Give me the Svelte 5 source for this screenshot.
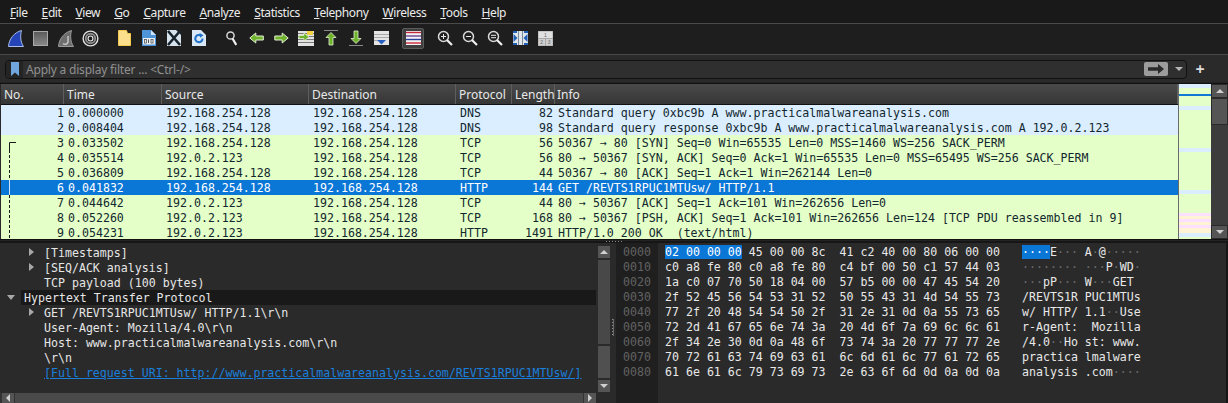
<script lang="ts">
	const menus = [
		['F', 'ile'], ['E', 'dit'], ['V', 'iew'], ['G', 'o'], ['C', 'apture'], ['A', 'nalyze'],
		['S', 'tatistics'], ['T', 'elephony'], ['W', 'ireless'], ['T', 'ools'], ['H', 'elp']
	];

	const host = '192.168.254.128';
	const peer = '192.0.2.123';
	const packets = [
		[1, '0.000000', host, host, 'DNS', 82, 'Standard query 0xbc9b A www.practicalmalwareanalysis.com', 'dns'],
		[2, '0.008404', host, host, 'DNS', 98, 'Standard query response 0xbc9b A www.practicalmalwareanalysis.com A 192.0.2.123', 'dns'],
		[3, '0.033502', host, host, 'TCP', 56, '50367 → 80 [SYN] Seq=0 Win=65535 Len=0 MSS=1460 WS=256 SACK_PERM', 'tcp'],
		[4, '0.035514', peer, host, 'TCP', 56, '80 → 50367 [SYN, ACK] Seq=0 Ack=1 Win=65535 Len=0 MSS=65495 WS=256 SACK_PERM', 'tcp'],
		[5, '0.036809', host, host, 'TCP', 44, '50367 → 80 [ACK] Seq=1 Ack=1 Win=262144 Len=0', 'tcp'],
		[6, '0.041832', host, host, 'HTTP', 144, 'GET /REVTS1RPUC1MTUsw/ HTTP/1.1', 'sel'],
		[7, '0.044642', peer, host, 'TCP', 44, '80 → 50367 [ACK] Seq=1 Ack=101 Win=262656 Len=0', 'tcp'],
		[8, '0.052260', peer, host, 'TCP', 168, '80 → 50367 [PSH, ACK] Seq=1 Ack=101 Win=262656 Len=124 [TCP PDU reassembled in 9]', 'tcp'],
		[9, '0.054231', peer, host, 'HTTP', 1491, 'HTTP/1.0 200 OK  (text/html)', 'tcp']
	];

	const tree = [
		{ text: '[Timestamps]', arrow: 'right', cls: 'd1' },
		{ text: '[SEQ/ACK analysis]', arrow: 'right', cls: 'd1' },
		{ text: 'TCP payload (100 bytes)', cls: 'd1' },
		{ text: 'Hypertext Transfer Protocol', arrow: 'down', cls: 'd0 picked' },
		{ text: 'GET /REVTS1RPUC1MTUsw/ HTTP/1.1\\r\\n', arrow: 'right', cls: 'd1' },
		{ text: 'User-Agent: Mozilla/4.0\\r\\n', cls: 'd1' },
		{ text: 'Host: www.practicalmalwareanalysis.com\\r\\n', cls: 'd1' },
		{ text: '\\r\\n', cls: 'd1' },
		{ text: '[Full request URI: http://www.practicalmalwareanalysis.com/REVTS1RPUC1MTUsw/]', cls: 'd1 link' }
	];

	const dump = [
		'02 00 00 00 45 00 00 8c 41 c2 40 00 80 06 00 00',
		'c0 a8 fe 80 c0 a8 fe 80 c4 bf 00 50 c1 57 44 03',
		'1a c0 07 70 50 18 04 00 57 b5 00 00 47 45 54 20',
		'2f 52 45 56 54 53 31 52 50 55 43 31 4d 54 55 73',
		'77 2f 20 48 54 54 50 2f 31 2e 31 0d 0a 55 73 65',
		'72 2d 41 67 65 6e 74 3a 20 4d 6f 7a 69 6c 6c 61',
		'2f 34 2e 30 0d 0a 48 6f 73 74 3a 20 77 77 77 2e',
		'70 72 61 63 74 69 63 61 6c 6d 61 6c 77 61 72 65',
		'61 6e 61 6c 79 73 69 73 2e 63 6f 6d 0d 0a 0d 0a'
	].map((line) => line.split(' '));

	const offset = (i: number) => (i * 16).toString(16).padStart(4, '0');
	const printable = (b: string) => {
		const n = parseInt(b, 16);
		return n >= 32 && n < 127;
	};
	const ascii = (b: string) => (printable(b) ? String.fromCharCode(parseInt(b, 16)) : '·');
	const hexText = (line: string[]) => line.slice(0, 8).join(' ') + '  ' + line.slice(8).join(' ');

	// minimap colour bands, top to bottom
	const bands = [
		['#daeeff', 4], ['#e4ffc7', 6], ['#1078d4', 2], ['#e4ffc7', 10], ['#daeeff', 4], ['#e4ffc7', 38],
		['#daeeff', 4], ['#e4ffc7', 38], ['#daeeff', 4], ['#e4ffc7', 19], ['#fce0ff', 3], ['#fff3d6', 3],
		['#fce0ff', 3], ['#fff3d6', 3], ['#fce0ff', 3], ['#fff3d6', 5], ['#daeeff', 4]
	];
</script>

<div class="app">
	<nav class="menubar">
		{#each menus as [key, rest]}
			<span class="menu"><u>{key}</u>{rest}</span>
		{/each}
	</nav>

	<div class="toolbar">
		<button class="tool" aria-label="Start"><svg width="16" height="17" viewBox="0 0 16 17"><path d="M.5 16.500C1 9 6 2.500 13.500.5 12 6 12.500 12 15.500 16.500Z" fill="#2444b8" stroke="#a9bde8"/></svg></button>
		<button class="tool" aria-label="Stop"><svg width="15" height="15" viewBox="0 0 15 15"><defs><linearGradient id="stopfill" x1="0" y1="0" x2="0" y2="1"><stop offset="0" stop-color="#5a5a5a"/><stop offset="1" stop-color="#8a8a8a"/></linearGradient></defs><rect x=".5" y=".5" width="14" height="14" fill="url(#stopfill)" stroke="#a8a8a8"/></svg></button>
		<button class="tool" aria-label="Restart"><svg width="16" height="17" viewBox="0 0 16 17"><path d="M.5 16.500C1 9 6 2.500 13.500.5 12 6 12.500 12 15.500 16.500Z" fill="#6e6e6e" stroke="#9a9a9a"/><path d="M10 6v6a3 3 0 0 1-5 1.500" fill="none" stroke="#c4c4c4" stroke-width="1.500"/></svg></button>
		<button class="tool" aria-label="Options"><svg width="17" height="17" viewBox="0 0 18 18" fill="none"><circle cx="9" cy="9" r="7.800" stroke="#e0e0e0" stroke-width="1.500"/><circle cx="9" cy="9" r="5" stroke="#8c8c8c" stroke-width="2"/><circle cx="9" cy="9" r="2.600" stroke="#ececec" stroke-width="1.200"/></svg></button>
		<i class="sep"></i>
		<button class="tool" aria-label="Open"><svg width="13" height="16" viewBox="0 0 13 16"><path d="M.5.5h8l1 3h3v12H.5Z" fill="#fbdf8c" stroke="#f5c94e"/></svg></button>
		<button class="tool" aria-label="Save"><svg width="14" height="16" viewBox="0 0 14 16"><path d="M0 0h9l5 5v11H0Z" fill="#4d94d8"/><path d="M9 0l5 5H9Z" fill="#cfe4f7"/><rect x="1" y="8" width="12" height="6.500" fill="#e8eef2"/><rect x="2.500" y="9.500" width="2" height="3.500" fill="none" stroke="#555" stroke-width=".8"/><rect x="6" y="9.500" width="1" height="3.500" fill="#555"/><rect x="9" y="9.500" width="2" height="3.500" fill="none" stroke="#555" stroke-width=".8"/></svg></button>
		<button class="tool" aria-label="Close"><svg width="14" height="16" viewBox="0 0 14 16"><path d="M0 0h9l5 5v11H0Z" fill="#d6e2ec"/><path d="M1 1l12 14M13 1L1 15" stroke="#16222c" stroke-width="2.600"/></svg></button>
		<button class="tool" aria-label="Reload"><svg width="14" height="16" viewBox="0 0 14 16" fill="none"><path d="M0 0h9l5 5v11H0Z" fill="#d9e8f4"/><path d="M10.500 8.500a3.600 3.600 0 1 1-1.300-2.700" stroke="#1e70c8" stroke-width="2"/><path d="M7.500 3l4 2.200-3.400 2.600Z" fill="#1e70c8"/></svg></button>
		<i class="sep narrow"></i>
		<button class="tool" aria-label="Find"><svg width="11" height="15" viewBox="0 0 11 15" fill="none"><circle cx="4.500" cy="4.500" r="3.600" stroke="#d8d8d8" stroke-width="1.500"/><path d="M6.500 7.500l3.800 6.500" stroke="#f0f0f0" stroke-width="2.200"/></svg></button>
		<button class="tool" aria-label="Back"><svg width="15" height="12" viewBox="0 0 15 12"><path d="M.8 6l6-5v3h7.500v4H6.800v3Z" fill="#6fb32c" stroke="#e4f0d4"/></svg></button>
		<button class="tool" aria-label="Forward"><svg width="15" height="12" viewBox="0 0 15 12"><path d="M14.200 6l-6-5v3H.8v4h7.400v3Z" fill="#6fb32c" stroke="#e4f0d4"/></svg></button>
		<button class="tool" aria-label="Go to packet"><svg width="16" height="16" viewBox="0 0 16 16"><path d="M0 1h16v15H0Z" fill="#e2e2e2"/><path d="M0 3.500h16M0 6.500h16M0 9.500h16M0 12.500h16" stroke="#7a7a7a"/><rect x="9" y="1" width="6" height="4" fill="#f2d040"/><path d="M11 7L6 3v2.400H1v3.200h5V11Z" fill="#6fb32c" stroke="#e4f0d4" stroke-width=".7"/></svg></button>
		<button class="tool" aria-label="First"><svg width="14" height="16" viewBox="0 0 14 16"><path d="M0 .5h14" stroke="#8a8a8a"/><path d="M7 2.500l5 5H9v7.500H5V7.500H2Z" fill="#6fb32c" stroke="#e4f0d4" stroke-width=".8"/></svg></button>
		<button class="tool" aria-label="Last"><svg width="14" height="16" viewBox="0 0 14 16"><path d="M0 15.500h14" stroke="#8a8a8a"/><path d="M7 13.500l5-5H9V1H5v7.500H2Z" fill="#6fb32c" stroke="#e4f0d4" stroke-width=".8"/></svg></button>
		<button class="tool" aria-label="Auto scroll"><svg width="15" height="14" viewBox="0 0 15 14"><rect width="15" height="14" fill="#e4e4e4"/><path d="M0 3.500h15M0 6.500h15M0 9.500h6" stroke="#a8a8a8"/><path d="M3 9h9l-4.500 4.500Z" fill="#2760c0"/></svg></button>
		<i class="sep"></i>
		<button class="tool active" aria-label="Colorize"><svg width="15" height="14" viewBox="0 0 15 14" fill="none"><rect width="15" height="14" fill="#f4f4f4"/><path d="M0 1.500h15" stroke="#c8283c" stroke-width="1.400"/><path d="M0 5h15" stroke="#6a3f8f" stroke-width="1.400"/><path d="M0 8.500h15" stroke="#2c3e9c" stroke-width="1.400"/><path d="M0 12h15" stroke="#c8283c" stroke-width="1.400"/></svg></button>
		<i class="sep"></i>
		<button class="tool" aria-label="Zoom in"><svg width="16" height="16" viewBox="0 0 16 16" fill="none"><circle cx="6.500" cy="6.500" r="5" stroke="#d8d8d8" stroke-width="1.500"/><path d="M10 10l5 5" stroke="#f0f0f0" stroke-width="2.200"/><path d="M4 6.500h5M6.500 4v5" stroke="#e8e8e8"/></svg></button>
		<button class="tool" aria-label="Zoom out"><svg width="16" height="16" viewBox="0 0 16 16" fill="none"><circle cx="6.500" cy="6.500" r="5" stroke="#d8d8d8" stroke-width="1.500"/><path d="M10 10l5 5" stroke="#f0f0f0" stroke-width="2.200"/><path d="M4 6.500h5" stroke="#e8e8e8"/></svg></button>
		<button class="tool" aria-label="Normal size"><svg width="16" height="16" viewBox="0 0 16 16" fill="none"><circle cx="6.500" cy="6.500" r="5" stroke="#d8d8d8" stroke-width="1.500"/><path d="M10 10l5 5" stroke="#f0f0f0" stroke-width="2.200"/><path d="M4 5.300h5M4 7.700h5" stroke="#e8e8e8"/></svg></button>
		<button class="tool" aria-label="Resize columns"><svg width="15" height="14" viewBox="0 0 15 14"><rect width="15" height="14" fill="#e0e6ec"/><path d="M4.500 7L.5 3v8ZM10.500 7l4-4v8Z" fill="#1f5fb4"/><path d="M0 1h4M0 13h4M11 1h4M11 13h4" stroke="#1f5fb4" stroke-width="2"/><path d="M5.500 0v14M9.500 0v14" stroke="#7a8a96"/></svg></button>
		<button class="tool" aria-label="Layout"><svg width="15" height="15" viewBox="0 0 15 15" font-family="'Liberation Sans', sans-serif" font-size="5" text-anchor="middle" fill="#666"><rect width="15" height="15" fill="#a8a8a8"/><rect x=".5" y=".5" width="14" height="6.500" fill="#e0e0e0"/><rect x=".5" y="8" width="6.500" height="6.500" fill="#cfcfcf"/><rect x="8" y="8" width="6.500" height="6.500" fill="#cfcfcf"/><text x="7.500" y="5.500">1</text><text x="3.750" y="13">2</text><text x="11.250" y="13">3</text></svg></button>
	</div>

	<div class="filterbar">
		<div class="filter">
			<span class="bookmark"><svg width="8" height="14" viewBox="0 0 8 14"><path d="M0 0h8v14L4 10.500 0 14Z" fill="#6fa6de"/></svg></span>
			<span class="placeholder">Apply a display filter ... &lt;Ctrl-/&gt;</span>
			<span class="apply"><svg width="16" height="10" viewBox="0 0 16 10"><path d="M0 3.200h10V0l6 5-6 5V6.800H0Z" fill="#2a2a2a"/></svg></span>
			<span class="caret"></span>
		</div>
		<span class="plus">+</span>
	</div>

	<section class="packets">
		<div class="list">
			<div class="row head">
				<span>No.</span><span>Time</span><span>Source</span><span>Destination</span><span>Protocol</span><span>Length</span><span>Info</span>
			</div>
			{#each packets as p}
				<div class="row mono {p[7]}">
					<span class="num">{p[0]}</span><span>{p[1]}</span><span>{p[2]}</span><span>{p[3]}</span><span>{p[4]}</span><span class="num">{p[5]}</span><span>{p[6]}</span>
				</div>
			{/each}
			<svg class="conv" width="10" height="98" viewBox="0 0 10 98" fill="none">
				<path d="M2.500 .5H9M2.500 .5V8" stroke="#1a1a1a"/>
				<path d="M2.500 8V38" stroke="#1a1a1a" stroke-dasharray="3 2"/>
				<path d="M2.500 38V53" stroke="#cfe2f5"/>
				<path d="M2.500 53V98" stroke="#1a1a1a" stroke-dasharray="3 2"/>
			</svg>
		</div>
		<div class="minimap">
			{#each bands as [color, h]}
				<i style="background:{color};height:{h}px"></i>
			{/each}
		</div>
		<div class="vbar">
			<span class="arrow up"></span>
			<span class="thumb list-thumb"></span>
			<span class="track"></span>
			<span class="arrow down"></span>
		</div>
	</section>

	<section class="details">
		<i class="grip-top"></i>
		<div class="tree-pane">
			<div class="tree-main">
				<div class="tree mono">
					{#each tree as node}
						<div class="node {node.cls}">
							{#if node.arrow}<i class="tri {node.arrow}"></i>{/if}
							<span>{node.text}</span>
						</div>
					{/each}
				</div>
				<div class="vbar small">
					<span class="arrow up"></span>
					<span class="track fill"></span>
					<span class="thumb tree-thumb"></span>
					<span class="arrow down"></span>
				</div>
			</div>
			<div class="hbar">
				<span class="harrow left"></span>
				<span class="hthumb"></span>
				<span class="harrow right"></span>
			</div>
		</div>
		<div class="grip"><i></i></div>
		<div class="hex mono">
			<div class="offsets">
				{#each dump as _, i}
					<div>{offset(i)}</div>
				{/each}
			</div>
			<div class="bytes">
				{#each dump as line, i}
					<div class="hexline">
						<span class="hexcol">{#if i === 0}<span class="hl">{hexText(line).slice(0, 11)}</span>{hexText(line).slice(11)}{:else}{hexText(line)}{/if}</span>
						<span class="asciicol">{#each line as b, j}<span class:dim={!printable(b)} class:hl={i === 0 && j < 4}>{ascii(b)}</span>{#if j === 7}{' '}{/if}{/each}</span>
					</div>
				{/each}
			</div>
		</div>
	</section>
</div>

<style>
	:global(body) {
		margin: 0;
		background: #232323;
	}

	.app {
		width: 1228px;
		height: 403px;
		overflow: hidden;
		display: flex;
		flex-direction: column;
		font-family: 'Noto Sans', sans-serif;
		font-size: 12px;
		color: #e4e4e4;
		background: #232323;
	}

	.mono {
		font-family: 'DejaVu Sans Mono', monospace;
		font-size: 11.6px;
		white-space: pre;
	}

	.menubar {
		height: 24px;
		box-sizing: border-box;
		border-bottom: 1px solid #4a4a4a;
		background: #191919;
		display: flex;
		align-items: center;
		padding: 2px 0 0 3px;
	}

	.menu {
		padding: 0 7px;
		font-size: 12px;
		letter-spacing: -0.4px;
		color: #ececec;
		line-height: 21px;
	}

	.toolbar {
		height: 31px;
		box-sizing: border-box;
		padding: 0 0 2px 3px;
		display: flex;
		align-items: center;
		background: #1e1e1e;
		border-bottom: 1px solid #4a4a4a;
	}

	.tool {
		width: 25px;
		height: 20px;
		padding: 0;
		border: 0;
		background: none;
		display: flex;
		align-items: center;
		justify-content: center;
		flex: none;
	}

	.tool.active {
		width: 22px;
		height: 21px;
		background: #3e3e3e;
		border: 1px solid #5c5c5c;
		border-radius: 2px;
		box-sizing: border-box;
	}

	.sep {
		width: 8.5px;
		flex: none;
	}

	.sep.narrow {
		width: 7px;
	}

	.filterbar {
		height: 27px;
		box-sizing: border-box;
		padding: 4px 21px 3px 5px;
		display: flex;
		align-items: center;
		background: #2a2a2a;
	}

	.filter {
		flex: 1;
		height: 19px;
		box-sizing: border-box;
		display: flex;
		align-items: center;
		background: #2f2f2f;
		border: 1px solid #111;
		border-radius: 4px;
	}

	.bookmark {
		width: 17px;
		height: 17px;
		display: flex;
		align-items: center;
		justify-content: center;
		background: #242424;
		border-radius: 3px 0 0 3px;
		flex: none;
	}

	.placeholder {
		margin-left: 3px;
		flex: 1;
		color: #8f8f8f;
		font-size: 12px;
		letter-spacing: -0.2px;
	}

	.apply {
		width: 24px;
		height: 14px;
		background: #9c9c9c;
		border-radius: 2px;
		display: flex;
		align-items: center;
		justify-content: center;
	}

	.caret {
		margin: 0 3px 0 7px;
		width: 0;
		height: 0;
		border: 4px solid transparent;
		border-top: 4px solid #b4b4b4;
		border-bottom: 0;
	}

	.plus {
		margin-left: 6px;
		width: 14px;
		text-align: center;
		font-size: 16px;
		line-height: 20px;
		font-weight: 700;
		color: #dcdcdc;
	}

	.packets {
		height: 157px;
		flex: none;
		margin-top: 1px;
		display: flex;
		background: #2a2a2a;
		border-top: 1px solid #111;
		border-bottom: 1px solid #111;
		box-sizing: border-box;
		padding-left: 1px;
	}

	.list {
		width: 1177px;
		flex: none;
		position: relative;
		background: #e4ffc7;
		overflow: hidden;
	}

	.row {
		display: grid;
		grid-template-columns: 63px 98px 147px 147px 56px 43px 1fr;
		height: 15px;
		line-height: 16px;
	}

	.row > span {
		padding-left: 5px;
		overflow: hidden;
	}

	.row > .num {
		padding: 0;
		text-align: right;
	}

	.row > .num:nth-child(6) {
		padding-right: 2px;
	}

	.row.mono > span:nth-child(n + 2):nth-child(-n + 5) {
		padding-left: 4px;
	}

	.row.mono > span:nth-child(4) {
		padding-left: 3px;
	}

	.row.mono > span:nth-child(7) {
		padding-left: 3px;
	}

	.row.head {
		height: 20px;
		line-height: 21px;
		font-size: 12px;
		color: #e8e8e8;
		background: linear-gradient(#4a4a4a, #363636);
		border-bottom: 1px solid #111;
		box-sizing: content-box;
	}

	.row.head > span {
		padding-left: 3px;
		box-shadow: inset -1px 0 #5e5e5e;
	}

	.row.head > span:last-child {
		padding-left: 2px;
	}

	.dns {
		background: #daeeff;
		color: #12272e;
	}

	.tcp {
		background: #e4ffc7;
		color: #12272e;
	}

	.sel {
		background: #0a76d6;
		color: #fff;
	}

	.conv {
		position: absolute;
		left: 6px;
		top: 58px;
	}

	.minimap {
		width: 33px;
		flex: none;
		background: #e4ffc7;
		display: flex;
		flex-direction: column;
		overflow: hidden;
		border-left: 1px solid #6a6a6a;
		box-sizing: border-box;
	}

	.minimap i {
		display: block;
		flex: none;
	}

	.vbar {
		width: 17px;
		flex: none;
		display: flex;
		flex-direction: column;
		background: #3a3a3a;
	}

	.vbar.small {
		width: 14px;
		margin-left: 1px;
	}

	.arrow {
		height: 14px;
		flex: none;
		background: #555;
		display: flex;
		align-items: center;
		justify-content: center;
		box-sizing: border-box;
		border: 1px solid #2a2a2a;
	}

	.arrow::after {
		content: '';
		border: 4px solid transparent;
	}

	.arrow.up::after {
		border-bottom: 4px solid #d0d0d0;
		border-top: 0;
	}

	.arrow.down::after {
		border-top: 4px solid #d0d0d0;
		border-bottom: 0;
	}

	.thumb {
		flex: none;
		background: #555;
		box-sizing: border-box;
		border: 1px solid #2a2a2a;
	}

	.list-thumb {
		height: 27px;
	}

	.tree-thumb {
		height: 34px;
		background: #505050;
	}

	.track {
		flex: 1;
		background: #3c3c3c;
	}

	.track.fill {
		background: #484848;
		border: 1px solid #2a2a2a;
	}

	.details {
		flex: 1;
		min-height: 0;
		display: flex;
		position: relative;
		background: #2a2a2a;
		border-top: 2px solid #161616;
		margin-top: 1px;
	}

	.grip-top {
		position: absolute;
		left: 606px;
		top: -2px;
		width: 16px;
		height: 1px;
		background: repeating-linear-gradient(90deg, #8a8a8a 0 1px, transparent 1px 3px);
	}

	.tree-pane {
		width: 610px;
		flex: none;
		display: flex;
		flex-direction: column;
	}

	.tree-main {
		flex: 1;
		min-height: 0;
		display: flex;
		padding-top: 2px;
		background: #2a2a2a;
	}

	.tree {
		width: 596px;
		flex: none;
		overflow: hidden;
		color: #e6e6e6;
	}

	.node {
		height: 15px;
		line-height: 16px;
		display: flex;
		position: relative;
	}

	.node.d1 {
		padding-left: 44px;
	}

	.node.d0 {
		padding-left: 24px;
	}

	.node.picked {
		margin-left: 21px;
		padding-left: 3px;
		background: #191919;
	}

	.node.link span {
		color: #1a7fdc;
		text-decoration: underline;
	}

	.tri {
		position: absolute;
		width: 0;
		height: 0;
		border: 4px solid transparent;
	}

	.tri.right {
		left: 29px;
		top: 3px;
		border-left: 5px solid #a8a8a8;
		border-right: 0;
	}

	.tri.down {
		left: -14px;
		top: 5px;
		border-top: 5px solid #a8a8a8;
		border-bottom: 0;
	}

	.hbar {
		height: 10px;
		flex: none;
		display: flex;
		gap: 1px;
		margin-right: 14px;
		background: #333;
		padding-left: 2px;
	}

	.harrow {
		width: 12px;
		background: #555;
		display: flex;
		align-items: center;
		justify-content: center;
	}

	.harrow::after {
		content: '';
		border: 4px solid transparent;
	}

	.harrow.left::after {
		border-right: 4px solid #d0d0d0;
		border-left: 0;
	}

	.harrow.right::after {
		border-left: 4px solid #d0d0d0;
		border-right: 0;
	}

	.hthumb {
		flex: 1;
		background: #4a4a4a;
	}

	.grip {
		width: 6px;
		flex: none;
		background: #2a2a2a;
		position: relative;
	}

	.grip i {
		position: absolute;
		left: 2px;
		top: 76px;
		width: 1px;
		height: 17px;
		background: repeating-linear-gradient(#8a8a8a 0 1px, transparent 1px 3px);
		box-shadow: 1px 0 #6a6a6a;
	}

	.hex {
		flex: 1;
		display: flex;
		min-width: 0;
	}

	.offsets {
		width: 42px;
		flex: none;
		background: #1f1f1f;
		color: #626262;
		padding: 2px 0 0 7px;
		box-sizing: border-box;
		line-height: 15px;
	}

	.bytes {
		flex: 1;
		padding: 2px 0 0 7px;
		line-height: 15px;
		color: #e8e8e8;
		border-right: 2px solid #161616;
	}

	.hexline {
		height: 15px;
	}

	.hexcol {
		display: inline-block;
		width: 350px;
	}

	.hl {
		background: #0a76d6;
		color: #fff;
	}

	.dim {
		color: #6c6c6c;
	}

	.hl.dim {
		color: #fff;
	}
</style>
